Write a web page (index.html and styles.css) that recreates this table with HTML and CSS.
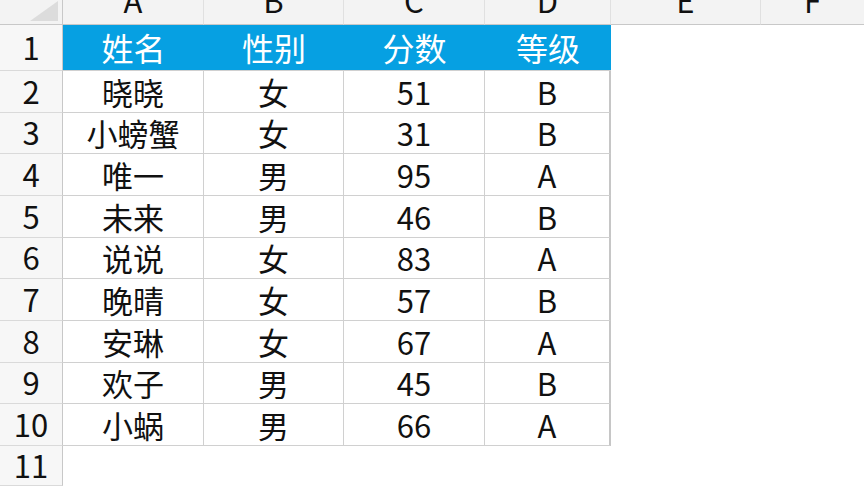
FILE: index.html
```html
<!DOCTYPE html>
<html lang="zh-CN">
<head>
<meta charset="utf-8">
<title>Sheet</title>
<link rel="stylesheet" href="styles.css">
</head>
<body>
<div class="sheet">
  <div class="row colhead">
    <div class="corner"><svg class="tri" width="28" height="20" viewBox="0 0 28 20"><polygon points="0,20 28,20 28,0" fill="#dcdcdc"/></svg></div>
    <div class="ch"><span>A</span></div>
    <div class="ch"><span>B</span></div>
    <div class="ch"><span>C</span></div>
    <div class="ch"><span>D</span></div>
    <div class="ch"><span>E</span></div>
    <div class="ch last"><span>F</span></div>
  </div>
  <div class="row r1">
    <div class="rh">1</div>
    <div class="hd">姓名</div>
    <div class="hd">性别</div>
    <div class="hd">分数</div>
    <div class="hd">等级</div>
    <div class="e"></div>
    <div class="e"></div>
  </div>
  <div class="row rb">
    <div class="rh">2</div><div class="c">晓晓</div><div class="c">女</div><div class="c">51</div><div class="c">B</div><div class="e"></div><div class="e"></div>
  </div>
  <div class="row rb">
    <div class="rh">3</div><div class="c">小螃蟹</div><div class="c">女</div><div class="c">31</div><div class="c">B</div><div class="e"></div><div class="e"></div>
  </div>
  <div class="row rb">
    <div class="rh">4</div><div class="c">唯一</div><div class="c">男</div><div class="c">95</div><div class="c">A</div><div class="e"></div><div class="e"></div>
  </div>
  <div class="row rb">
    <div class="rh">5</div><div class="c">未来</div><div class="c">男</div><div class="c">46</div><div class="c">B</div><div class="e"></div><div class="e"></div>
  </div>
  <div class="row rb">
    <div class="rh">6</div><div class="c">说说</div><div class="c">女</div><div class="c">83</div><div class="c">A</div><div class="e"></div><div class="e"></div>
  </div>
  <div class="row rb">
    <div class="rh">7</div><div class="c">晚晴</div><div class="c">女</div><div class="c">57</div><div class="c">B</div><div class="e"></div><div class="e"></div>
  </div>
  <div class="row rb">
    <div class="rh">8</div><div class="c">安琳</div><div class="c">女</div><div class="c">67</div><div class="c">A</div><div class="e"></div><div class="e"></div>
  </div>
  <div class="row rb">
    <div class="rh">9</div><div class="c">欢子</div><div class="c">男</div><div class="c">45</div><div class="c">B</div><div class="e"></div><div class="e"></div>
  </div>
  <div class="row rb">
    <div class="rh">10</div><div class="c">小蜗</div><div class="c">男</div><div class="c">66</div><div class="c">A</div><div class="e"></div><div class="e"></div>
  </div>
  <div class="row rlast">
    <div class="rh">11</div><div class="e"></div><div class="e"></div><div class="e"></div><div class="e"></div><div class="e"></div><div class="e"></div>
  </div>
</div>
</body>
</html>
```

FILE: styles.css
```css
* { box-sizing: border-box; }
html, body {
  margin: 0;
  padding: 0;
  background: #ffffff;
  overflow: hidden;
}
body {
  width: 864px;
  height: 486px;
  font-family: "Noto Sans CJK SC", "Noto Sans", sans-serif;
  font-size: 31px;
  color: #111111;
}
.sheet {
  display: flex;
  flex-direction: column;
  width: 864px;
  height: 486px;
  overflow: hidden;
}
.row {
  display: grid;
  grid-template-columns: 63px 141px 140px 141px 126px 150px 1fr;
  flex: none;
}
.colhead { height: 25px; }
.r1 { height: 46px; }
.rb { height: 41.667px; }
.rlast { flex: 1 1 auto; }

.corner {
  background: #f3f3f3;
  border-right: 1px solid #c8c8c8;
  border-bottom: 1px solid #c8c8c8;
  display: flex;
  justify-content: flex-end;
  align-items: flex-end;
  padding: 0 4px 3px 0;
  overflow: hidden;
}
.tri { display: block; }
.ch {
  background: #f3f3f3;
  border-right: 1px solid #e0e0e0;
  border-bottom: 1px solid #c8c8c8;
  overflow: hidden;
  text-align: center;
  color: #111111;
}
.ch span {
  display: block;
  line-height: 30px;
  margin-top: -15px;
}
.ch.last { border-right: none; }

.rh {
  background: #f7f7f7;
  border-right: 1px solid #c8c8c8;
  border-bottom: 1px solid #dadada;
  display: flex;
  align-items: center;
  justify-content: center;
  padding-bottom: 2px;
  line-height: 1;
  color: #111111;
}
.hd {
  background: #06a0e2;
  color: #ffffff;
  font-size: 32px;
  border-bottom: 1px solid #d0d0d0;
  display: flex;
  align-items: center;
  justify-content: center;
  padding-bottom: 2px;
  line-height: 1;
}
.c {
  border-right: 1px solid #d0d0d0;
  border-bottom: 1px solid #d0d0d0;
  display: flex;
  align-items: center;
  justify-content: center;
  padding-top: 0;
  line-height: 1;
}
.row .c:nth-child(5) { border-right: 2px solid #c6c6c6; }
.e { background: #ffffff; }
```
